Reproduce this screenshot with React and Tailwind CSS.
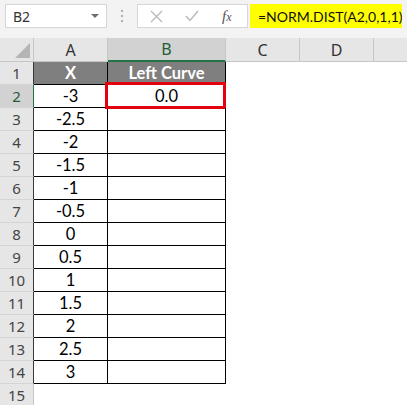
import React from "react";

const values = ["-3", "-2.5", "-2", "-1.5", "-1", "-0.5", "0", "0.5", "1", "1.5", "2", "2.5", "3"];

function RowHeader({ n }) {
  const selected = n === 2;
  const last = n === 15;
  return (
    <div
      className={
        "w-[34px] h-[23px] shrink-0 flex items-center justify-center text-[15px] border-b border-b-[#d4d4d4] border-r " +
        (selected
          ? "bg-[#d2d2d2] text-[#1f5c37] border-r-[#217346]"
          : last
          ? "bg-[#e6e6e6] text-[#444] border-r-[#c6c6c6]"
          : "bg-[#e6e6e6] text-[#444] border-r-[#3a3a3a]")
      }
      style={{ fontFamily: '"Noto Sans", "Open Sans", sans-serif' }}
    >
      {n}
    </div>
  );
}

export default function App() {
  const cellFont = { fontFamily: 'Lato, "Noto Sans", sans-serif' };
  const uiFont = { fontFamily: '"Noto Sans", "Open Sans", sans-serif' };
  return (
    <div className="w-[407px] h-[405px] overflow-hidden bg-white">
      {/* Toolbar */}
      <div className="h-[38px] bg-[#f3f3f3] flex items-start pt-[4px]">
        <div className="ml-[5px] w-[102px] h-[24px] bg-white border border-[#d6d6d6] flex items-center justify-between pl-[7px] pr-[7px]">
          <span className="text-[14px] text-[#333]" style={uiFont}>B2</span>
          <svg width="8" height="5" viewBox="0 0 8 5">
            <path d="M0 0 L8 0 L4 4 Z" fill="#6e6e6e" />
          </svg>
        </div>
        <div className="w-[30px] h-[24px] flex items-center justify-center">
          <svg width="4" height="14" viewBox="0 0 4 14">
            <circle cx="2" cy="2" r="1.2" fill="#b0b0b0" />
            <circle cx="2" cy="7" r="1.2" fill="#b0b0b0" />
            <circle cx="2" cy="12" r="1.2" fill="#b0b0b0" />
          </svg>
        </div>
        <div className="w-[111px] h-[24px] bg-white border border-[#d6d6d6] flex items-center">
          <svg className="ml-[12px]" width="13" height="13" viewBox="0 0 13 13">
            <path d="M1 1 L12 12 M12 1 L1 12" stroke="#b8b8b8" strokeWidth="1.3" fill="none" />
          </svg>
          <svg className="ml-[22px]" width="14" height="12" viewBox="0 0 14 12">
            <path d="M1 6 L5 10.5 L13 1" stroke="#b8b8b8" strokeWidth="1.4" fill="none" />
          </svg>
          <span
            className="ml-[23px] text-[15px] italic text-[#555] leading-none"
            style={{ fontFamily: '"Liberation Serif", serif' }}
          >
            f<span className="text-[12px]">x</span>
          </span>
        </div>
        <div
          className="ml-[2px] w-[152px] h-[24px] bg-[#ffff00] flex items-center pl-[8px] text-[14px] text-[#111] whitespace-nowrap overflow-hidden"
          style={cellFont}
        >
          =NORM.DIST(A2,0,1,1)
        </div>
      </div>

      {/* Column headers */}
      <div className="flex h-[24px]" style={uiFont}>
        <div className="w-[34px] shrink-0 bg-[#e6e6e6] border-r border-b border-[#c6c6c6] flex items-end justify-end pr-[3px] pb-[3px]">
          <svg width="15" height="15" viewBox="0 0 15 15">
            <path d="M15 0 L15 15 L0 15 Z" fill="#b5b5b5" />
          </svg>
        </div>
        <div className="w-[74px] shrink-0 bg-[#e6e6e6] border-r border-b border-[#c6c6c6] flex items-center justify-center text-[16px] text-[#333]">
          A
        </div>
        <div className="w-[118px] shrink-0 bg-[#d2d2d2] border-r border-r-[#c6c6c6] border-b-2 border-b-[#217346] flex items-center justify-center text-[16px] text-[#1f5c37]">
          B
        </div>
        <div className="w-[74px] shrink-0 bg-[#e6e6e6] border-r border-b border-[#c6c6c6] flex items-center justify-center text-[16px] text-[#333]">
          C
        </div>
        <div className="w-[74px] shrink-0 bg-[#e6e6e6] border-r border-b border-[#c6c6c6] flex items-center justify-center text-[16px] text-[#333]">
          D
        </div>
        <div className="flex-1 bg-[#e6e6e6] border-b border-[#c6c6c6]" />
      </div>

      {/* Row 1 */}
      <div className="flex" style={cellFont}>
        <RowHeader n={1} />
        <div className="w-[74px] h-[23px] shrink-0 bg-[#7f7f7f] border-r border-b border-black flex items-center justify-center text-white font-bold text-[16.5px]">
          X
        </div>
        <div className="w-[118px] h-[23px] shrink-0 bg-[#7f7f7f] border-r border-b border-black flex items-center justify-center text-white font-bold text-[16.5px]">
          Left Curve
        </div>
      </div>

      {/* Rows 2-14 */}
      {values.map((v, i) => (
        <div className="flex" key={v} style={cellFont}>
          <RowHeader n={i + 2} />
          <div className="w-[74px] h-[23px] shrink-0 border-r border-b border-black flex items-center justify-center text-black text-[16.5px]">
            {v}
          </div>
          <div className="relative w-[118px] h-[23px] shrink-0 border-r border-b border-black flex items-center justify-center text-black text-[16.5px]">
            {i === 0 ? "0.0" : ""}
            {i === 0 && (
              <div className="absolute -left-[3px] -top-[3px] -right-[1px] -bottom-[2px] border-[3px] border-[#e3000f]" />
            )}
          </div>
        </div>
      ))}

      {/* Row 15 */}
      <div className="flex">
        <RowHeader n={15} />
      </div>
    </div>
  );
}
